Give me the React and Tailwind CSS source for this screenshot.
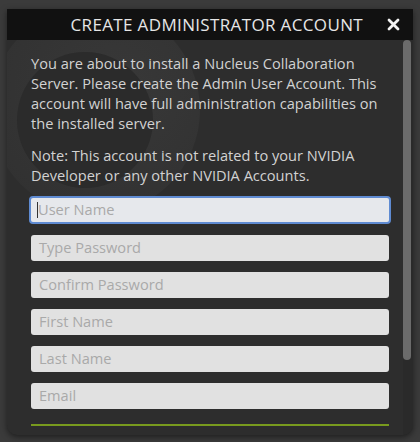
export default function App() {
  const fields = ['Type Password', 'Confirm Password', 'First Name', 'Last Name', 'Email']

  return (
    <div className="h-[442px] w-[420px] overflow-hidden bg-[#3b3b3b] px-[7px] pt-[9px] font-['Open_Sans',sans-serif]">
      <div className="flex h-[426px] flex-col overflow-hidden rounded-b-[10px] bg-[#2d2d2d] shadow-[0_2px_6px_rgba(0,0,0,0.5)]">
        <div className="flex h-[31px] shrink-0 items-center justify-end bg-[#111111] pr-[13px]">
          <h1 className="text-[17px] tracking-[0.35px] text-[#e6e6e6]">CREATE ADMINISTRATOR ACCOUNT</h1>
          <svg className="ml-[24px]" width="13" height="13" viewBox="0 0 13 13">
            <path d="M2 2L11 11M11 2L2 11" stroke="#f2f2f2" strokeWidth="2.8" strokeLinecap="round" />
          </svg>
        </div>

        <div className="relative flex flex-1 overflow-hidden">
          {/* faint logo-like crescent behind the text */}
          <div className="pointer-events-none absolute left-[-17px] top-[-35px] h-[210px] w-[210px] rounded-full bg-[radial-gradient(circle_at_60%_40%,#383838,#323232_70%,#2f2f2f)]" />
          <div className="pointer-events-none absolute left-[10px] top-[12px] h-[136px] w-[136px] rounded-full bg-[#2b2b2b]" />

          <div className="relative flex flex-1 flex-col pl-[24px] pr-[14px] pt-[13px]">
            <p className="text-[14.6px] leading-[20px] text-[#d2d2d2]">
              You are about to install a Nucleus Collaboration Server. Please create the Admin User Account. This account will have full administration capabilities on the installed server.
            </p>
            <p className="mt-[12px] text-[14.6px] leading-[20px] text-[#d2d2d2]">
              Note: This account is not related to your NVIDIA Developer or any other NVIDIA Accounts.
            </p>

            <div className="mt-[11px] flex flex-col gap-[11px]">
              <div className="-mx-[2px] flex h-[28px] items-center rounded-[4px] border-2 border-[#5f8bd2] bg-[#e6e8ec] pl-[6px]">
                <span className="h-[16px] w-px bg-[#333]" />
                <span className="text-[14.6px] text-[#a9a9a9]">User Name</span>
              </div>
              {fields.map((f) => (
                <div key={f} className="flex h-[26px] items-center rounded-[3px] bg-[#e1e1e1] pl-[8px]">
                  <span className="text-[14.6px] text-[#a9a9a9]">{f}</span>
                </div>
              ))}
            </div>

            <div className="mt-[15px] h-[2px] bg-[#789a1e]" />
          </div>

          <div className="relative w-[10px] shrink-0 bg-[#2a2a2a] pr-[2px]">
            <div className="h-[320px] w-[8px] rounded-b-[4px] rounded-t-[4px] bg-[#6b6b6b]" />
          </div>
        </div>
      </div>
    </div>
  )
}
